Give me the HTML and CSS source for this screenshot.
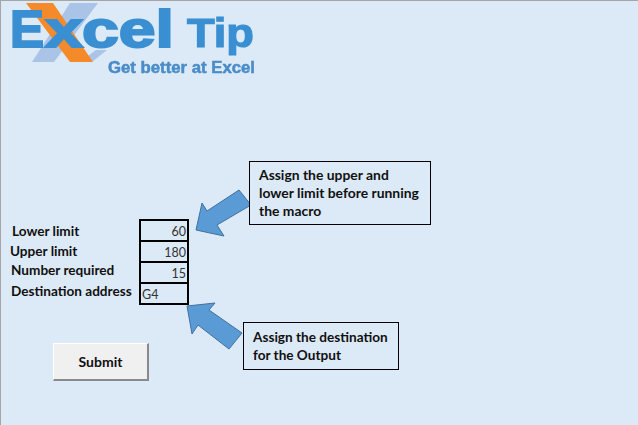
FILE: index.html
```html
<!DOCTYPE html>
<html lang="en">
<head>
    <meta charset="UTF-8">
    <meta name="viewport" content="width=device-width, initial-scale=1.0">
    <title>Excel Tip</title>
    <link rel="stylesheet" href="styles.css">
</head>
<body>

    <div class="sheet">
        <svg class="logo" width="270" height="80" viewBox="0 0 270 80">
            <polygon points="70,3 98,3 54,62 32,62" fill="#a9c4e6"/>
            <polygon points="107,50 92,62 80,62 96,50" fill="#a9c4e6"/>
            <polygon points="26,3 53,3 93,62 70,62" fill="#f58a2a"/>
            <text x="10" y="46.5" class="logo-big" textLength="34" lengthAdjust="spacingAndGlyphs">E</text>
            <text x="45" y="46.5" class="logo-big" textLength="38" lengthAdjust="spacingAndGlyphs">x</text>
            <text x="82" y="46.5" class="logo-big" textLength="92" lengthAdjust="spacingAndGlyphs">cel</text>
            <text x="187" y="47" class="logo-tip" textLength="67" lengthAdjust="spacingAndGlyphs">Tip</text>
            <text x="108" y="72.5" class="logo-tag" textLength="147" lengthAdjust="spacingAndGlyphs">Get better at Excel</text>
        </svg>

        <div class="form">
            <div class="labels">
                <div class="label lower">Lower limit</div>
                <div class="label upper">Upper limit</div>
                <div class="label number">Number required</div>
                <div class="label dest">Destination address</div>
            </div>
            <div class="cells">
                <div class="cell">60</div>
                <div class="cell">180</div>
                <div class="cell">15</div>
                <div class="cell text">G4</div>
            </div>
        </div>

        <button class="submit">Submit</button>

        <svg class="arrows" width="638" height="425" viewBox="0 0 638 425">
            <polygon points="196,230 202,203 207,211 239,190 251,205 217,225 224,236"/>
            <polygon points="187,306 215,303 209,310 242,333 229,349 198,325 192,334"/>
        </svg>

        <div class="callout callout-limit">Assign the upper and<br>lower limit before running<br>the macro</div>
        <div class="callout callout-dest">Assign the destination<br>for the Output</div>
    </div>

</body>
</html>
```

FILE: styles.css
```css
* {
    margin: 0;
    padding: 0;
    box-sizing: border-box;
}
body {
    font-family: "Lato", "Open Sans", sans-serif;
    background-color: #dce9f6;
    color: #111;
}
.sheet {
    position: relative;
    width: 638px;
    height: 425px;
    border-top: 1px solid #a6a6a6;
    border-left: 1px solid #a6a6a6;
    overflow: hidden;
}
.logo {
    display: block;
    margin-top: -1px;
    margin-left: -1px;
    filter: blur(0.4px);
}
.logo text {
    font-family: "Liberation Sans", Arial, sans-serif;
    font-weight: bold;
}
.logo-big {
    font-size: 52px;
    fill: #3a8fd2;
    stroke: #3a8fd2;
    stroke-width: 2;
}
.logo-tip {
    font-size: 40px;
    fill: #3a8fd2;
    stroke: #3a8fd2;
    stroke-width: 1.2;
}
.logo-tag {
    font-size: 16px;
    fill: #4a8cc8;
    stroke: #4a8cc8;
    stroke-width: 0.5;
}
.form {
    display: flex;
    margin-top: 139px;
}
.labels {
    width: 138px;
    padding-top: 2px;
    font-size: 13.6px;
    font-weight: bold;
}
.label {
    height: 20px;
    line-height: 20px;
    white-space: nowrap;
}
.label.lower {
    margin-left: 11px;
}
.label.upper {
    margin-left: 9px;
}
.label.number {
    margin-left: 10px;
    height: 19px;
    margin-top: -1px;
    margin-bottom: 2px;
}
.label.dest {
    margin-left: 10px;
}
.cells {
    width: 50px;
    border: 2px solid #000;
    font-size: 12.5px;
    color: #333;
}
.cell {
    height: 21px;
    line-height: 22px;
    padding-right: 1px;
    text-align: right;
    border-bottom: 2px solid #000;
}
.cell:last-child {
    height: 19px;
    border-bottom: none;
}
.cell.text {
    text-align: left;
    padding-left: 1px;
}
.submit {
    display: block;
    width: 96px;
    height: 38px;
    margin-top: 38px;
    margin-left: 52px;
    font-family: inherit;
    font-size: 14px;
    font-weight: bold;
    color: #111;
    background-color: #f0f0f0;
    border: none;
    border-top: 1px solid #fff;
    border-left: 1px solid #fff;
    border-right: 2px solid #8a8a8a;
    border-bottom: 2px solid #8a8a8a;
}
.arrows {
    position: absolute;
    top: -1px;
    left: -1px;
}
.arrows polygon {
    fill: #5b9bd5;
    stroke: #41719c;
    stroke-width: 1;
}
.callout {
    position: absolute;
    background-color: #dce9f6;
    border: 1px solid #000;
    font-weight: bold;
    line-height: 18px;
    white-space: nowrap;
}
.callout-limit {
    left: 248px;
    top: 160px;
    width: 182px;
    height: 64px;
    padding: 4px 0 0 9px;
    font-size: 13.9px;
}
.callout-dest {
    left: 242px;
    top: 321px;
    width: 156px;
    height: 48px;
    padding: 5px 0 0 9px;
    font-size: 13.6px;
}
```
